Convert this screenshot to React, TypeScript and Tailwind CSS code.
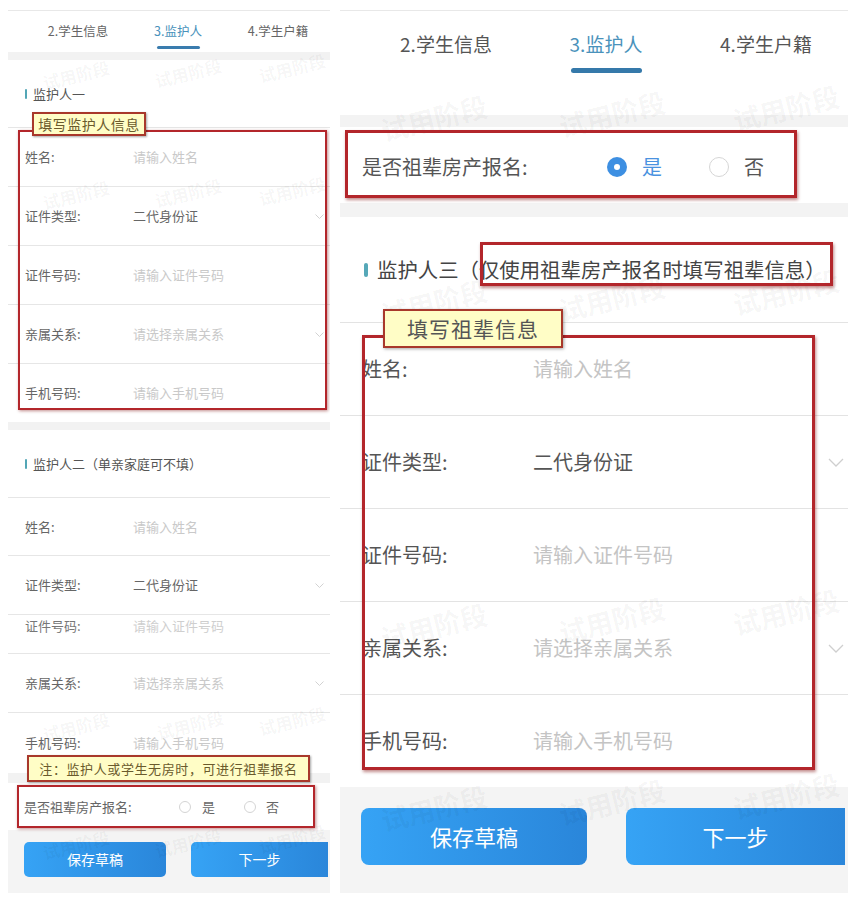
import React from "react";

const FONT = "font-['Noto_Sans_CJK_SC','Noto_Sans',sans-serif]";

type Mark = { x: number; y: number };

// faint "试用阶段" trial stamps tiled over each screen
const smallMarks: Mark[] = [
  { x: 34, y: 52 }, { x: 146, y: 50 }, { x: 250, y: 45 },
  { x: 34, y: 172 }, { x: 146, y: 170 }, { x: 250, y: 168 },
  { x: 34, y: 704 }, { x: 148, y: 702 }, { x: 250, y: 698 },
  { x: 34, y: 822 }, { x: 146, y: 820 }, { x: 250, y: 816 },
];

const largeMarks: Mark[] = [
  { x: 40, y: 88 }, { x: 218, y: 84 }, { x: 392, y: 78 },
  { x: 40, y: 272 }, { x: 218, y: 268 }, { x: 392, y: 262 },
  { x: 40, y: 596 }, { x: 218, y: 590 }, { x: 392, y: 582 },
  { x: 40, y: 778 }, { x: 218, y: 772 }, { x: 392, y: 766 },
];

function Chevron({ big }: { big?: boolean }) {
  return big ? (
    <svg width="16" height="9" viewBox="0 0 16 9" className="shrink-0">
      <polyline points="1,1 8,8 15,1" fill="none" stroke="#cfcfcf" strokeWidth="1.3" />
    </svg>
  ) : (
    <svg width="9" height="5" viewBox="0 0 9 5" className="shrink-0">
      <polyline points="0.5,0.5 4.5,4.5 8.5,0.5" fill="none" stroke="#d2d2d2" strokeWidth="1" />
    </svg>
  );
}

type RowProps = {
  label: string;
  value: string;
  filled?: boolean;
  chevron?: boolean;
  cls: string;
};

function SmallRow({ label, value, filled, chevron, cls }: RowProps) {
  return (
    <div className={`flex items-center pl-[17px] pr-[6px] text-[13px] leading-[18px] ${cls}`}>
      <span className="w-[108px] shrink-0 text-[#666]">{label}</span>
      <span className={`flex-1 ${filled ? "text-[#666]" : "text-[#c9c9c9]"}`}>{value}</span>
      {chevron && <Chevron />}
    </div>
  );
}

function LargeRow({ label, value, filled, chevron, cls }: RowProps) {
  return (
    <div className={`flex items-center pl-[22px] pr-[4px] text-[20px] leading-[28px] ${cls}`}>
      <span className="w-[171px] shrink-0 text-[#555]">{label}</span>
      <span className={`flex-1 ${filled ? "text-[#555]" : "text-[#c4c4c4]"}`}>{value}</span>
      {chevron && <Chevron big />}
    </div>
  );
}

function SmallScreen() {
  return (
    <div className={`relative w-[322px] shrink-0 overflow-hidden ${FONT}`}>
      {/* step tabs */}
      <div className="flex h-[42px] border-t border-[#e8e8e8] pl-[20px] text-[12.5px] leading-[18px]">
        <div className="flex w-[100px] flex-col items-center pt-[11px] text-[#666]">2.学生信息</div>
        <div className="flex w-[100px] flex-col items-center pt-[11px] text-[#4a92bb]">
          <span>3.监护人</span>
          <span className="mt-[6px] h-[3px] w-[43px] rounded-full bg-[#3a7cae]" />
        </div>
        <div className="flex w-[100px] flex-col items-center pt-[11px] text-[#666]">4.学生户籍</div>
      </div>
      <div className="h-[8px] bg-[#f2f2f2]" />

      {/* guardian one */}
      <div className="flex h-[68px] items-center border-b border-[#e6e6e6] pl-[17px] text-[13px] text-[#555]">
        <span className="mr-[6px] h-[10px] w-[2px] rounded-full bg-[#52a6b6]" />
        监护人一
      </div>
      <SmallRow label="姓名:" value="请输入姓名" cls="h-[59px] border-b border-[#e6e6e6]" />
      <SmallRow label="证件类型:" value="二代身份证" filled chevron cls="h-[59px] border-b border-[#e6e6e6]" />
      <SmallRow label="证件号码:" value="请输入证件号码" cls="h-[59px] border-b border-[#e6e6e6]" />
      <SmallRow label="亲属关系:" value="请选择亲属关系" chevron cls="h-[59px] border-b border-[#e6e6e6]" />
      <SmallRow label="手机号码:" value="请输入手机号码" cls="h-[58px]" />
      <div className="h-[8px] bg-[#f2f2f2]" />

      {/* guardian two */}
      <div className="flex h-[68px] items-center border-b border-[#e6e6e6] pl-[17px] text-[13px] text-[#555]">
        <span className="mr-[6px] h-[10px] w-[2px] rounded-full bg-[#52a6b6]" />
        监护人二（单亲家庭可不填）
      </div>
      <SmallRow label="姓名:" value="请输入姓名" cls="h-[58px] border-b border-[#e6e6e6]" />
      <SmallRow label="证件类型:" value="二代身份证" filled chevron cls="h-[59px] border-b border-[#e6e6e6]" />
      <div className="flex h-[39px] items-start overflow-hidden border-b border-[#e6e6e6] pl-[17px] pt-[2px] text-[13px] leading-[18px]">
        <span className="w-[108px] shrink-0 text-[#777]">证件号码:</span>
        <span className="text-[#cfcfcf]">请输入证件号码</span>
      </div>
      <SmallRow label="亲属关系:" value="请选择亲属关系" chevron cls="h-[59px] border-b border-[#e6e6e6]" />
      <SmallRow label="手机号码:" value="请输入手机号码" cls="h-[60px]" />
      <div className="h-[10px] bg-[#f2f2f2]" />

      {/* grandparent property toggle */}
      <div className="flex h-[47px] items-center pl-[16px] text-[13px] leading-[18px] text-[#666]">
        <span className="w-[155px] shrink-0">是否祖辈房产报名:</span>
        <span className="h-[12px] w-[12px] rounded-full border border-[#d4d4d4]" />
        <span className="ml-[11px]">是</span>
        <span className="ml-[29px] h-[12px] w-[12px] rounded-full border border-[#d4d4d4]" />
        <span className="ml-[10px]">否</span>
      </div>

      {/* actions */}
      <div className="flex h-[63px] gap-[25px] bg-[#f4f4f4] pl-[16px] pt-[12px]">
        <button className="flex h-[35px] w-[142px] items-center justify-center rounded-[5px] bg-linear-to-r from-[#36a3f5] to-[#2a86da] text-[14px] text-white">
          保存草稿
        </button>
        <button className="mr-[2px] flex h-[35px] flex-1 items-center justify-center rounded-l-[5px] bg-linear-to-r from-[#36a3f5] to-[#2a86da] text-[14px] text-white">
          下一步
        </button>
      </div>

      {smallMarks.map((m, i) => (
        <span
          key={i}
          className="pointer-events-none absolute -rotate-[14deg] whitespace-nowrap text-[17px] font-bold text-[#0000000b]"
          style={{ left: m.x, top: m.y }}
        >
          试用阶段
        </span>
      ))}

      {/* annotations */}
      <div className="pointer-events-none absolute left-[10px] top-[120px] h-[280px] w-[309px] border-2 border-[#b3262b] shadow-[1px_1px_3px_rgba(120,0,0,0.45)]" />
      <div className="pointer-events-none absolute left-[24px] top-[102px] flex h-[24px] w-[114px] items-center justify-center border-2 border-[#a8382b] bg-[#fffdc6] text-[14px] tracking-[0.5px] text-[#6a5a2c] shadow-[1px_1px_2px_rgba(0,0,0,0.35)]">
        填写监护人信息
      </div>
      <div className="pointer-events-none absolute left-[19px] top-[745px] flex h-[27px] w-[283px] items-center justify-center border-2 border-[#a8382b] bg-[#fffdc6] text-[13px] tracking-[0.6px] text-[#6a5a2c] shadow-[1px_1px_2px_rgba(0,0,0,0.35)]">
        注：监护人或学生无房时，可进行祖辈报名
      </div>
      <div className="pointer-events-none absolute left-[9px] top-[775px] h-[43px] w-[298px] border-2 border-[#b3262b] shadow-[1px_1px_3px_rgba(120,0,0,0.45)]" />
    </div>
  );
}

function LargeScreen() {
  return (
    <div className={`relative w-[508px] shrink-0 overflow-hidden ${FONT}`}>
      {/* step tabs */}
      <div className="flex h-[105px] border-t border-[#e8e8e8] pl-[26px] text-[19px] leading-[26px]">
        <div className="flex w-[160px] flex-col items-center pt-[20px] text-[#555]">2.学生信息</div>
        <div className="flex w-[160px] flex-col items-center pt-[20px] text-[#4a92bb]">
          <span>3.监护人</span>
          <span className="mt-[11px] h-[5px] w-[71px] rounded-full bg-[#3579aa]" />
        </div>
        <div className="flex w-[160px] flex-col items-center pt-[20px] text-[#555]">4.学生户籍</div>
      </div>
      <div className="h-[12px] bg-[#f3f3f3]" />

      {/* grandparent property toggle */}
      <div className="flex h-[76px] items-center pl-[22px] pt-[3px] text-[20px] leading-[28px] text-[#555]">
        <span className="w-[245px] shrink-0">是否祖辈房产报名:</span>
        <span className="flex h-[20px] w-[20px] items-center justify-center rounded-full bg-[#3d8fe2]">
          <span className="h-[6px] w-[6px] rounded-full bg-white" />
        </span>
        <span className="ml-[15px] text-[#4a92e0]">是</span>
        <span className="ml-[47px] h-[20px] w-[20px] rounded-full border border-[#d6d6d6]" />
        <span className="ml-[15px]">否</span>
      </div>
      <div className="h-[14px] bg-[#f3f3f3]" />

      {/* guardian three */}
      <div className="flex h-[106px] items-center whitespace-nowrap border-b border-[#e3e3e3] pl-[24px] text-[20.4px] text-[#444]">
        <span className="mr-[9px] h-[14px] w-[4px] rounded-full bg-[#56a8b8]" />
        监护人三（仅使用祖辈房产报名时填写祖辈信息）
      </div>
      <LargeRow label="姓名:" value="请输入姓名" cls="h-[93px] border-b border-[#e3e3e3]" />
      <LargeRow label="证件类型:" value="二代身份证" filled chevron cls="h-[93px] border-b border-[#e3e3e3]" />
      <LargeRow label="证件号码:" value="请输入证件号码" cls="h-[93px] border-b border-[#e3e3e3]" />
      <LargeRow label="亲属关系:" value="请选择亲属关系" chevron cls="h-[93px] border-b border-[#e3e3e3]" />
      <LargeRow label="手机号码:" value="请输入手机号码" cls="h-[92px]" />

      {/* actions */}
      <div className="flex h-[106px] gap-[39px] bg-[#f4f4f4] pl-[21px] pt-[21px]">
        <button className="flex h-[57px] w-[226px] items-center justify-center rounded-[8px] bg-linear-to-r from-[#36a3f5] to-[#2a86da] text-[22px] text-white">
          保存草稿
        </button>
        <button className="mr-[3px] flex h-[57px] flex-1 items-center justify-center rounded-l-[8px] bg-linear-to-r from-[#36a3f5] to-[#2a86da] text-[22px] text-white">
          下一步
        </button>
      </div>

      {largeMarks.map((m, i) => (
        <span
          key={i}
          className="pointer-events-none absolute -rotate-[14deg] whitespace-nowrap text-[27px] font-bold text-[#0000000b]"
          style={{ left: m.x, top: m.y }}
        >
          试用阶段
        </span>
      ))}

      {/* annotations */}
      <div className="pointer-events-none absolute left-[5px] top-[120px] h-[68px] w-[452px] border-[3px] border-[#b3262b] shadow-[1px_2px_3px_rgba(120,0,0,0.45)]" />
      <div className="pointer-events-none absolute left-[140px] top-[232px] h-[44px] w-[353px] border-[3px] border-[#b3262b] shadow-[1px_2px_3px_rgba(120,0,0,0.45)]" />
      <div className="pointer-events-none absolute left-[22px] top-[325px] h-[435px] w-[453px] border-[3px] border-[#b3262b] shadow-[1px_2px_3px_rgba(120,0,0,0.45)]" />
      <div className="pointer-events-none absolute left-[43px] top-[299px] flex h-[39px] w-[180px] items-center justify-center border-2 border-[#a8382b] bg-[#fffdc6] text-[21px] tracking-[1px] text-[#555] shadow-[1px_1px_3px_rgba(0,0,0,0.35)]">
        填写祖辈信息
      </div>
    </div>
  );
}

export default function App() {
  return (
    <div className="flex h-[906px] w-[855px] gap-[10px] overflow-hidden bg-white pl-[8px] pt-[10px]">
      <SmallScreen />
      <LargeScreen />
    </div>
  );
}
